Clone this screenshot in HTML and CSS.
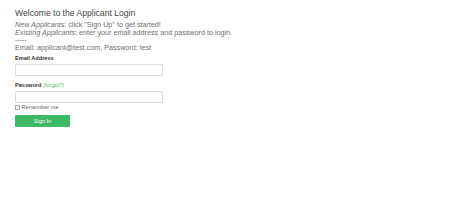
FILE: index.html
```html
<!DOCTYPE html>
<html>
<head>
<meta charset="utf-8">
<link rel="stylesheet" href="styles.css">
</head>
<body>
<div class="page">
  <h1 class="title">Welcome to the Applicant Login</h1>
  <div class="intro">
    <div><em>New Applicants</em>: click "Sign Up" to get started!</div>
    <div><em>Existing Applicants</em>: enter your email address and password to login.</div>
    <div>-----</div>
    <div>Email: applicant@test.com, Password: test</div>
  </div>
  <form class="form">
    <label class="label">Email Address</label>
    <input class="input" type="text">
    <label class="label label-pw">Password <span class="forgot">(forgot?)</span></label>
    <input class="input" type="password">
    <div class="remember"><span class="check"></span>Remember me</div>
    <button class="btn" type="button">Sign In</button>
  </form>
</div>
</body>
</html>
```
FILE: styles.css
```css
html, body {
  margin: 0;
  padding: 0;
  background: #fff;
}
body {
  font-family: "Liberation Sans", Arial, sans-serif;
  color: #555;
}
.page {
  padding: 8px 15px 0 15px;
}
.title {
  margin: 0;
  font-size: 8.6px;
  font-weight: normal;
  color: #444;
  line-height: 11px;
}
.intro {
  margin-top: 2px;
  font-size: 7.2px;
  line-height: 7.6px;
  color: #707070;
}
.intro em {
  font-style: italic;
}
.form {
  display: flex;
  flex-direction: column;
  align-items: flex-start;
  margin-top: 4px;
}
.label {
  font-size: 5.6px;
  font-weight: bold;
  color: #333;
  line-height: 7px;
}
.label-pw {
  margin-top: 6px;
}
.forgot {
  color: #5cb85c;
  font-weight: normal;
}
.input {
  box-sizing: border-box;
  width: 148px;
  height: 12px;
  margin: 2px 0 0 0;
  padding: 0;
  border: 1px solid #dcdcdc;
  border-radius: 1px;
  background: #fff;
}
.remember {
  display: flex;
  align-items: center;
  margin-top: 0.5px;
  font-size: 5.6px;
  line-height: 7px;
  color: #666;
}
.check {
  display: inline-block;
  box-sizing: border-box;
  width: 4.5px;
  height: 4.5px;
  border: 0.5px solid #aaa;
  border-radius: 0.5px;
  margin-right: 2px;
}
.btn {
  margin-top: 4.5px;
  width: 55px;
  height: 12px;
  padding: 0;
  border: none;
  border-radius: 1px;
  background: #3db865;
  color: #fff;
  font-family: "Liberation Sans", Arial, sans-serif;
  font-size: 5.6px;
}
```
